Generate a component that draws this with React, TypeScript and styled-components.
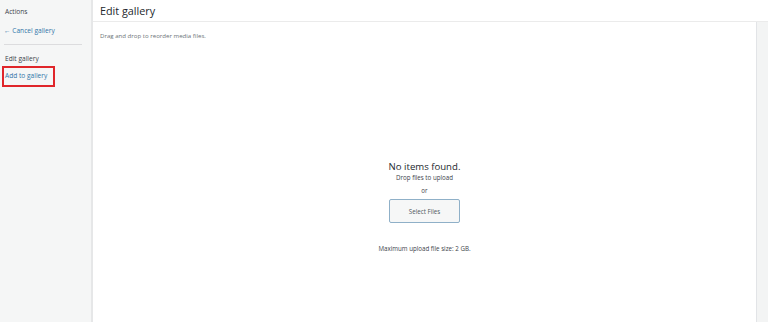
import React from "react";
import styled, { createGlobalStyle } from "styled-components";

const GlobalStyle = createGlobalStyle`
  html, body {
    margin: 0;
    padding: 0;
    background: #fff;
  }
  body {
    font-family: "Open Sans", "Noto Sans", sans-serif;
    color: #32373c;
  }
`;

export default function App() {
  return (
    <>
      <GlobalStyle />
      <Layout>
        <Sidebar>
          <MenuHeading>Actions</MenuHeading>
          <MenuLink>← Cancel gallery</MenuLink>
          <Separator />
          <MenuHeading>Edit gallery</MenuHeading>
          <MenuLink highlighted>Add to gallery</MenuLink>
        </Sidebar>
        <Main>
          <Header>
            <Title>Edit gallery</Title>
          </Header>
          <Body>
            <Content>
              <Hint>Drag and drop to reorder media files.</Hint>
              <Uploader>
                <Empty>No items found.</Empty>
                <Small>Drop files to upload</Small>
                <Small spaced>or</Small>
                <SelectButton>Select Files</SelectButton>
                <MaxSize>Maximum upload file size: 2 GB.</MaxSize>
              </Uploader>
            </Content>
            <Aside />
          </Body>
        </Main>
      </Layout>
    </>
  );
}

const Layout = styled.div`
  display: flex;
  height: 100vh;
`;

const Sidebar = styled.div`
  width: 93px;
  flex-shrink: 0;
  box-sizing: border-box;
  padding: 7px 9px 0 4px;
  background: #f5f6f6;
  border-right: 2px solid #e6e7e8;
  display: flex;
  flex-direction: column;
  align-items: flex-start;
`;

const MenuHeading = styled.div`
  font-size: 6.6px;
  line-height: 9px;
  font-weight: 400;
  color: #3c434a;
  padding-left: 1px;
  margin-bottom: 10px;
`;

const MenuLink = styled.div<{ highlighted?: boolean }>`
  font-size: 6.6px;
  line-height: 9px;
  color: #2f75a8;
  ${(p) =>
    p.highlighted
      ? `
    margin-left: -2px;
    margin-top: -7px;
    padding: 3px 6px 5px 1px;
    border: 2px solid #e0262a;
  `
      : `
    padding-left: 0;
  `}
`;

const Separator = styled.div`
  align-self: stretch;
  height: 1px;
  background: #dcdcde;
  margin: 9px 0 9px 0;
`;

const Main = styled.div`
  flex: 1;
  display: flex;
  flex-direction: column;
  min-width: 0;
`;

const Header = styled.div`
  height: 21px;
  flex-shrink: 0;
  border-bottom: 1px solid #ebebeb;
  display: flex;
  align-items: center;
  padding-left: 7px;
`;

const Title = styled.h1`
  margin: 0;
  font-size: 10.8px;
  font-weight: 400;
  color: #23282d;
`;

const Body = styled.div`
  flex: 1;
  display: flex;
`;

const Content = styled.div`
  flex: 1;
  padding: 9px 7px 0;
  display: flex;
  flex-direction: column;
`;

const Hint = styled.div`
  font-size: 6.1px;
  line-height: 9px;
  color: #6c7378;
`;

const Uploader = styled.div`
  margin-top: 120px;
  display: flex;
  flex-direction: column;
  align-items: center;
`;

const Empty = styled.div`
  font-size: 9.6px;
  line-height: 13px;
  color: #23282d;
`;

const Small = styled.div<{ spaced?: boolean }>`
  font-size: 6.2px;
  line-height: 9px;
  color: #3c434a;
  margin-top: ${(p) => (p.spaced ? "4px" : "0")};
`;

const SelectButton = styled.button`
  margin-top: 4px;
  width: 71px;
  height: 24px;
  box-sizing: border-box;
  border: 1px solid #8fb0c8;
  border-radius: 2px;
  background: #f6f7f7;
  color: #50575e;
  font-family: "Open Sans", "Noto Sans", sans-serif;
  font-size: 6.2px;
  padding: 0;
`;

const MaxSize = styled.div`
  margin-top: 21px;
  font-size: 6.2px;
  line-height: 9px;
  color: #3c434a;
`;

const Aside = styled.div`
  width: 11px;
  flex-shrink: 0;
  background: #f3f4f4;
  border-left: 1px solid #e2e4e7;
`;
